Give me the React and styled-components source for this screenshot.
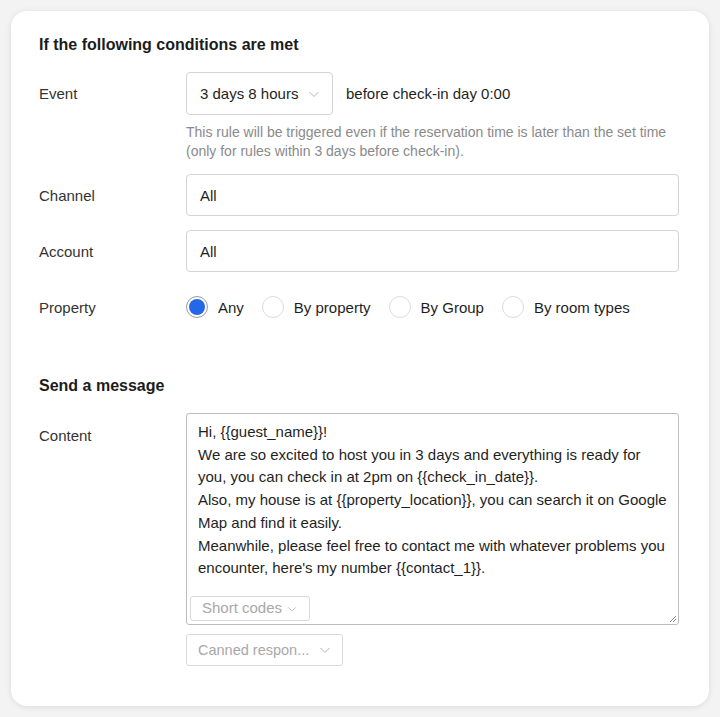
import React from 'react';
import styled, { createGlobalStyle } from 'styled-components';

const GlobalStyle = createGlobalStyle`
  html, body {
    margin: 0;
    padding: 0;
    background: #f3f3f3;
  }
  body {
    font-family: "Liberation Sans", Arial, sans-serif;
    color: #1f1f1f;
  }
`;

const Page = styled.div`
  padding: 11px;
  width: 720px;
  height: 717px;
  box-sizing: border-box;
`;

const Card = styled.div`
  background: #ffffff;
  border-radius: 16px;
  box-shadow: 0 1px 6px rgba(0, 0, 0, 0.1);
  height: 695px;
  box-sizing: border-box;
  padding: 24px 30px 0 28px;
`;

const SectionTitle = styled.h3`
  margin: 0;
  font-size: 16px;
  font-weight: 700;
  color: #1c1c1c;
  line-height: 20px;
`;

const Row = styled.div`
  display: grid;
  grid-template-columns: 147px 1fr;
  align-items: ${p => (p.top ? 'start' : 'center')};
  margin-top: ${p => p.gap || 0}px;
`;

const Label = styled.div`
  font-size: 15px;
  color: #333;
  padding-top: ${p => p.pad || 0}px;
`;

const Inline = styled.div`
  display: flex;
  align-items: center;
  gap: 13px;
`;

const SelectBox = styled.div`
  display: flex;
  align-items: center;
  justify-content: space-between;
  height: 43px;
  box-sizing: border-box;
  width: 147px;
  padding: 0 12px 0 13px;
  border: 1px solid #d4d4d4;
  border-radius: 4px;
  font-size: 15px;
  color: #1f1f1f;
`;

const PlainText = styled.span`
  font-size: 15px;
  color: #1f1f1f;
`;

const Hint = styled.div`
  font-size: 14px;
  line-height: 19px;
  color: #8a8a8a;
  margin-top: 8px;
  white-space: nowrap;
`;

const Input = styled.div`
  height: 42px;
  box-sizing: border-box;
  border: 1px solid #d4d4d4;
  border-radius: 4px;
  padding: 0 13px;
  display: flex;
  align-items: center;
  font-size: 15px;
  color: #1f1f1f;
`;

const Radios = styled.div`
  display: flex;
  align-items: center;
  height: 42px;
`;

const RadioItem = styled.label`
  display: flex;
  align-items: center;
  gap: 10px;
  margin-right: 18px;
  font-size: 15px;
  color: #1f1f1f;
`;

const RadioDot = styled.span`
  width: 22px;
  height: 22px;
  box-sizing: border-box;
  border-radius: 50%;
  border: 1px solid ${p => (p.checked ? '#9a9a9a' : '#dcdcdc')};
  display: flex;
  align-items: center;
  justify-content: center;
  &::after {
    content: '';
    width: 16px;
    height: 16px;
    border-radius: 50%;
    background: ${p => (p.checked ? '#2468e8' : 'transparent')};
  }
`;

const TextArea = styled.div`
  position: relative;
  height: 212px;
  box-sizing: border-box;
  border: 1px solid #bdbdbd;
  border-radius: 3px;
  padding: 7px 11px 0 11px;
  font-size: 15px;
  line-height: 22.7px;
  color: #1f1f1f;
`;

const Para = styled.div``;

const SmallButton = styled.div`
  position: absolute;
  left: 3px;
  bottom: 3px;
  display: flex;
  align-items: center;
  gap: 5px;
  height: 25px;
  box-sizing: border-box;
  padding: 0 12px 0 11px;
  border: 1px solid #d9d9d9;
  border-radius: 3px;
  font-size: 15px;
  color: #a8a8a8;
`;

const Grip = styled.svg`
  position: absolute;
  right: 1px;
  bottom: 1px;
`;

const CannedButton = styled.div`
  display: inline-flex;
  align-items: center;
  gap: 10px;
  margin-top: 9px;
  height: 32px;
  box-sizing: border-box;
  padding: 0 11px 0 11px;
  border: 1px solid #d9d9d9;
  border-radius: 3px;
  font-size: 14.5px;
  color: #a8a8a8;
`;

const Chevron = ({ size = 12, color = '#b5b5b5' }) => (
  <svg width={size} height={size} viewBox="0 0 12 12" fill="none">
    <path d="M1.5 4l4.5 4.5L10.5 4" stroke={color} strokeWidth="1" />
  </svg>
);

const options = ['Any', 'By property', 'By Group', 'By room types'];

export default function App() {
  return (
    <>
      <GlobalStyle />
      <Page>
        <Card>
          <SectionTitle>If the following conditions are met</SectionTitle>

          <Row gap={17} top>
            <Label pad={13}>Event</Label>
            <div>
              <Inline>
                <SelectBox>
                  3 days 8 hours
                  <Chevron />
                </SelectBox>
                <PlainText>before check-in day 0:00</PlainText>
              </Inline>
              <Hint>
                This rule will be triggered even if the reservation time is later than the set time
                <br />
                (only for rules within 3 days before check-in).
              </Hint>
            </div>
          </Row>

          <Row gap={13}>
            <Label>Channel</Label>
            <Input>All</Input>
          </Row>

          <Row gap={14}>
            <Label>Account</Label>
            <Input>All</Input>
          </Row>

          <Row gap={14}>
            <Label>Property</Label>
            <Radios>
              {options.map((o, i) => (
                <RadioItem key={o}>
                  <RadioDot checked={i === 0} />
                  {o}
                </RadioItem>
              ))}
            </Radios>
          </Row>

          <Row gap={48}>
            <SectionTitle>Send a message</SectionTitle>
          </Row>

          <Row gap={17} top>
            <Label pad={14}>Content</Label>
            <div>
              <TextArea>
                <Para>Hi, {'{{guest_name}}'}!</Para>
                <Para>
                  We are so excited to host you in 3 days and everything is ready for you, you can
                  check in at 2pm on {'{{check_in_date}}'}.
                </Para>
                <Para>
                  Also, my house is at {'{{property_location}}'}, you can search it on Google Map
                  and find it easily.
                </Para>
                <Para>
                  Meanwhile, please feel free to contact me with whatever problems you encounter,
                  here's my number {'{{contact_1}}'}.
                </Para>
                <SmallButton>
                  Short codes
                  <Chevron size={10} />
                </SmallButton>
                <Grip width="8" height="8" viewBox="0 0 8 8">
                  <path d="M7 1L1 7M7 4L4 7" stroke="#888" strokeWidth="1" />
                </Grip>
              </TextArea>
              <CannedButton>
                Canned respon...
                <Chevron />
              </CannedButton>
            </div>
          </Row>
        </Card>
      </Page>
    </>
  );
}
